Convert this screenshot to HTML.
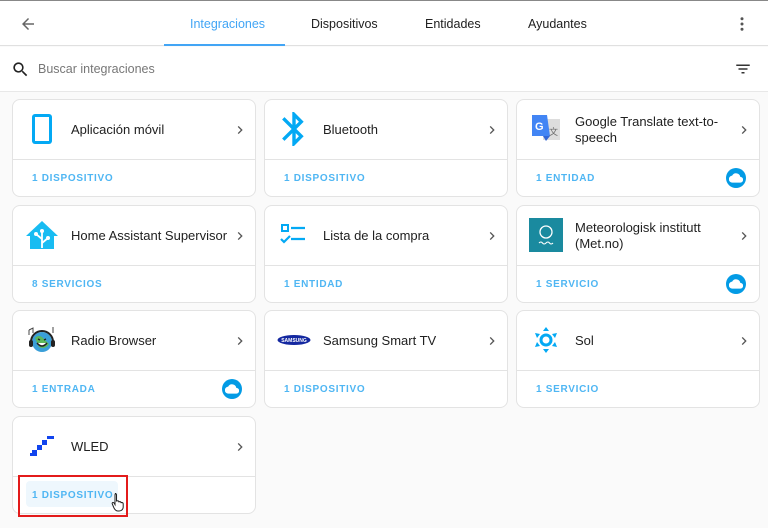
<!DOCTYPE html>
<html><head><style>
*{margin:0;padding:0;box-sizing:border-box}
body{width:768px;height:528px;overflow:hidden;background:#fafafa;font-family:"Liberation Sans",sans-serif;position:relative}
.hdr{position:absolute;left:0;top:0;width:768px;height:46px;background:#fff;border-bottom:1px solid #e0e0e0;border-top:1px solid #888}
.tab{position:absolute;top:16px;font-size:12.5px;color:#212121}
.srch{position:absolute;left:0;top:47px;width:768px;height:45px;background:#fff;border-bottom:1px solid #e8e8e8}
.card{position:absolute;width:244px;height:98px;background:#fff;border:1px solid #e3e3e3;border-radius:8px;overflow:hidden}
.card .top{position:absolute;left:0;top:0;width:100%;height:60px;border-bottom:1px solid #e3e3e3}
.card .t{position:absolute;left:58px;top:0;height:60px;width:165px;display:flex;align-items:center;font-size:13px;color:#212121;line-height:16px}
.card .ch{position:absolute;left:219px;top:21px}
.card .ic{position:absolute;left:12px;top:12px;width:34px;height:34px;display:flex;align-items:center;justify-content:center}
.card .f{position:absolute;left:19px;top:73px;font-size:10px;font-weight:bold;letter-spacing:0.7px;color:#4fb6f3}
.card .cl{position:absolute;left:209px;top:68px;width:20px;height:20px;border-radius:50%;background:#039be5;display:flex;align-items:center;justify-content:center}
</style></head><body>
<div class="hdr">
<svg style="position:absolute;left:19px;top:14px" width="18" height="18" viewBox="0 0 24 24"><path d="M20 11H7.8l5.6-5.6L12 4l-8 8 8 8 1.4-1.4L7.8 13H20z" fill="#666"/></svg>
<div class="tab" style="left:190px;color:#42a5f5">Integraciones</div>
<div style="position:absolute;left:164px;top:43px;width:121px;height:2px;background:#42a5f5"></div>
<div class="tab" style="left:311px">Dispositivos</div>
<div class="tab" style="left:425px">Entidades</div>
<div class="tab" style="left:528px">Ayudantes</div>
<svg style="position:absolute;left:733px;top:14px" width="18" height="18" viewBox="0 0 24 24"><circle cx="12" cy="5" r="2" fill="#555"/><circle cx="12" cy="12" r="2" fill="#555"/><circle cx="12" cy="19" r="2" fill="#555"/></svg>
</div>
<div class="srch">
<svg style="position:absolute;left:11px;top:13px" width="19" height="19" viewBox="0 0 24 24"><path d="M15.5 14h-.8l-.3-.3A6.5 6.5 0 1 0 9.5 16a6.5 6.5 0 0 0 4.2-1.6l.3.3v.8l5 5 1.5-1.5-5-5zm-6 0A4.5 4.5 0 1 1 14 9.5 4.5 4.5 0 0 1 9.5 14z" fill="#222"/></svg>
<div style="position:absolute;left:38px;top:15px;font-size:12.5px;color:#777">Buscar integraciones</div>
<svg style="position:absolute;left:734px;top:13px" width="18" height="18" viewBox="0 0 24 24"><path d="M3 6h18v2H3zm3 5h12v2H6zm4 5h4v2h-4z" fill="#333"/></svg>
</div>

<!-- row 1 -->
<div class="card" style="left:12px;top:99px"><div class="top"></div>
<div class="ic"><svg width="24" height="34" viewBox="0 0 24 34"><rect x="2" y="2" width="20" height="30" rx="3" fill="#03a9f4"/><rect x="5" y="5" width="14" height="24" fill="#fff"/></svg></div>
<div class="t">Aplicación móvil</div>
<svg class="ch" width="16" height="18" viewBox="0 0 24 24"><path d="M8.6 16.6 13.2 12 8.6 7.4 10 6l6 6-6 6z" fill="#555"/></svg>
<div class="f">1 DISPOSITIVO</div></div>

<div class="card" style="left:264px;top:99px"><div class="top"></div>
<div class="ic"><svg width="30" height="34" viewBox="4 2 16 20"><path d="M17.7 7.7 12 2h-1v7.6L6.4 5 5 6.4l5.6 5.6L5 17.6 6.4 19l4.6-4.6V22h1l5.7-5.7-4.3-4.3 4.3-4.3zM13 5.8l1.9 1.9L13 9.6V5.8zm1.9 10.5L13 18.2v-3.8l1.9 1.9z" fill="#03a9f4"/></svg></div>
<div class="t">Bluetooth</div>
<svg class="ch" width="16" height="18" viewBox="0 0 24 24"><path d="M8.6 16.6 13.2 12 8.6 7.4 10 6l6 6-6 6z" fill="#555"/></svg>
<div class="f">1 DISPOSITIVO</div></div>

<div class="card" style="left:516px;top:99px"><div class="top"></div>
<div class="ic"><svg width="32" height="32" viewBox="0 0 32 32"><rect x="13" y="6" width="17" height="21" fill="#ddd"/><path d="M2 2h15l3 21H2z" fill="#4285f4"/><path d="M13 23l3 5 4-5z" fill="#3367d6"/><text x="5" y="17" font-size="11" font-weight="bold" fill="#fff" font-family="Liberation Sans">G</text><text x="19" y="22" font-size="9" fill="#666" font-family="Liberation Sans">文</text></svg></div>
<div class="t">Google Translate text-to-speech</div>
<svg class="ch" width="16" height="18" viewBox="0 0 24 24"><path d="M8.6 16.6 13.2 12 8.6 7.4 10 6l6 6-6 6z" fill="#555"/></svg>
<div class="f">1 ENTIDAD</div>
<div class="cl"><svg width="14" height="14" viewBox="0 0 24 24"><path d="M19.4 10A7.5 7.5 0 0 0 5.4 8 6 6 0 0 0 6 20h13a5 5 0 0 0 .4-10z" fill="#fff"/></svg></div></div>

<!-- row 2 -->
<div class="card" style="left:12px;top:205px"><div class="top"></div>
<div class="ic"><svg width="34" height="32" viewBox="0 0 34 32"><path d="M17 2 1 17h4v13h24V17h4z" fill="#18bcf2"/><g stroke="#fff" stroke-width="1.8" fill="none"><path d="M17 29V12M17 20l-6-5M17 24l6-5"/></g><circle cx="17" cy="12" r="2" fill="#fff"/><circle cx="11" cy="15" r="2" fill="#fff"/><circle cx="23" cy="19" r="2" fill="#fff"/></svg></div>
<div class="t" style="width:170px;white-space:nowrap">Home Assistant Supervisor</div>
<svg class="ch" width="16" height="18" viewBox="0 0 24 24"><path d="M8.6 16.6 13.2 12 8.6 7.4 10 6l6 6-6 6z" fill="#555"/></svg>
<div class="f">8 SERVICIOS</div></div>

<div class="card" style="left:264px;top:205px"><div class="top"></div>
<div class="ic"><svg width="28" height="22" viewBox="0 0 28 22"><rect x="2" y="1" width="6" height="6" fill="none" stroke="#03a9f4" stroke-width="2"/><path d="M11 4h14M11 15h14" stroke="#03a9f4" stroke-width="2.2"/><path d="M1 15l3 3 6-6" stroke="#03a9f4" stroke-width="2.2" fill="none"/></svg></div>
<div class="t">Lista de la compra</div>
<svg class="ch" width="16" height="18" viewBox="0 0 24 24"><path d="M8.6 16.6 13.2 12 8.6 7.4 10 6l6 6-6 6z" fill="#555"/></svg>
<div class="f">1 ENTIDAD</div></div>

<div class="card" style="left:516px;top:205px"><div class="top"></div>
<div class="ic"><svg width="34" height="34" viewBox="0 0 34 34"><rect width="34" height="34" fill="#1a8a9f"/><circle cx="17" cy="14" r="6" fill="none" stroke="#fff" stroke-width="1.3"/><path d="M10 25q2-2 3.5 0t3.5 0 3.5 0 3.5 0" stroke="#fff" stroke-width="1.1" fill="none"/></svg></div>
<div class="t">Meteorologisk institutt (Met.no)</div>
<svg class="ch" width="16" height="18" viewBox="0 0 24 24"><path d="M8.6 16.6 13.2 12 8.6 7.4 10 6l6 6-6 6z" fill="#555"/></svg>
<div class="f">1 SERVICIO</div>
<div class="cl"><svg width="14" height="14" viewBox="0 0 24 24"><path d="M19.4 10A7.5 7.5 0 0 0 5.4 8 6 6 0 0 0 6 20h13a5 5 0 0 0 .4-10z" fill="#fff"/></svg></div></div>

<!-- row 3 -->
<div class="card" style="left:12px;top:310px"><div class="top"></div>
<div class="ic"><svg width="32" height="32" viewBox="0 0 32 32"><circle cx="16" cy="18" r="10" fill="#3a9fd8"/><path d="M9 14q4-4 8 0t6 6q-4 6-10 3z" fill="#5cb85c"/><path d="M11 19q5 6 10 0" stroke="#222" stroke-width="1.5" fill="#fff"/><path d="M12 15l2 1M20 15l-2 1" stroke="#222" stroke-width="1.3"/><path d="M5 18a11 11 0 0 1 22 0" stroke="#222" stroke-width="2" fill="none"/><rect x="3" y="16" width="4" height="7" rx="2" fill="#222"/><rect x="25" y="16" width="4" height="7" rx="2" fill="#222"/><path d="M3 6v5M3 6l4-2v5M27 3v6" stroke="#444" stroke-width="1" fill="none"/></svg></div>
<div class="t">Radio Browser</div>
<svg class="ch" width="16" height="18" viewBox="0 0 24 24"><path d="M8.6 16.6 13.2 12 8.6 7.4 10 6l6 6-6 6z" fill="#555"/></svg>
<div class="f">1 ENTRADA</div>
<div class="cl"><svg width="14" height="14" viewBox="0 0 24 24"><path d="M19.4 10A7.5 7.5 0 0 0 5.4 8 6 6 0 0 0 6 20h13a5 5 0 0 0 .4-10z" fill="#fff"/></svg></div></div>

<div class="card" style="left:264px;top:310px"><div class="top"></div>
<div class="ic"><svg width="34" height="12" viewBox="0 0 34 12"><ellipse cx="17" cy="6" rx="16.5" ry="5" fill="#1428a0"/><text x="17" y="8" font-size="5" fill="#fff" text-anchor="middle" font-family="Liberation Sans" font-weight="bold">SAMSUNG</text></svg></div>
<div class="t">Samsung Smart TV</div>
<svg class="ch" width="16" height="18" viewBox="0 0 24 24"><path d="M8.6 16.6 13.2 12 8.6 7.4 10 6l6 6-6 6z" fill="#555"/></svg>
<div class="f">1 DISPOSITIVO</div></div>

<div class="card" style="left:516px;top:310px"><div class="top"></div>
<div class="ic"><svg width="26" height="28" viewBox="0 0 26 28"><circle cx="13" cy="14" r="5" fill="none" stroke="#03a9f4" stroke-width="3"/><path d="M13 1l3 4h-6zM13 27l3-4h-6zM2 7l5 1-3 4zM24 7l-5 1 3 4zM2 21l5-1-3-4zM24 21l-5-1 3-4z" fill="#03a9f4"/></svg></div>
<div class="t">Sol</div>
<svg class="ch" width="16" height="18" viewBox="0 0 24 24"><path d="M8.6 16.6 13.2 12 8.6 7.4 10 6l6 6-6 6z" fill="#555"/></svg>
<div class="f">1 SERVICIO</div></div>

<!-- row 4 -->
<div class="card" style="left:12px;top:416px"><div class="top"></div>
<div class="ic"><svg width="26" height="22" viewBox="0 0 26 22"><path d="M18 1h7v3h-7zM13 5h5v5h-5zM8 10h5v5H8zM3 15h5v4H3zM1 18h7v3H1z" fill="#1144ee"/></svg></div>
<div class="t">WLED</div>
<svg class="ch" width="16" height="18" viewBox="0 0 24 24"><path d="M8.6 16.6 13.2 12 8.6 7.4 10 6l6 6-6 6z" fill="#555"/></svg>
<div style="position:absolute;left:13px;top:64px;width:92px;height:26px;background:#eef7fd;border-radius:4px"></div>
<div class="f">1 DISPOSITIVO</div></div>
<div style="position:absolute;left:18px;top:475px;width:110px;height:42px;border:2px solid #e31b1b"></div>
<svg style="position:absolute;left:111px;top:492px" width="16" height="20" viewBox="0 0 16 20"><path d="M4 1.5c1 0 1.5.6 1.5 1.5v6l1-.2c.8 0 1.3.5 1.3 1l1-.2c.8 0 1.2.5 1.2 1l.8-.1c.9 0 1.4.6 1.4 1.4V15c0 2-1.5 4-4 4H7c-2 0-3-1-4-3L1.3 12c-.4-.8 0-1.5.7-1.5.5 0 1 .3 1.3.9l.7 1.200V3c0-.9.3-1.5 1-1.5z" fill="#fff" stroke="#222" stroke-width="1"/></svg>
</body></html>
